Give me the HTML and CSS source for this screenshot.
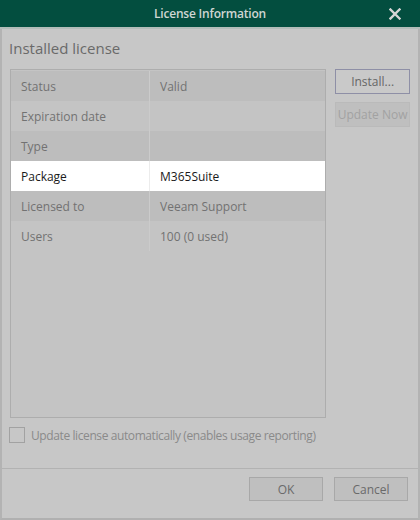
FILE: index.html
```html
<!DOCTYPE html>
<html>
<head>
<meta charset="utf-8">
<link rel="stylesheet" href="styles.css">
</head>
<body>
<div class="window">
  <div class="titlebar">
    <span class="title">License Information</span>
    <span class="close">
      <svg width="12" height="12" viewBox="0 0 12 12"><path d="M1.5 1.5 L10.5 10.5 M10.5 1.5 L1.5 10.5" stroke="#d6d6d6" stroke-width="2.4" stroke-linecap="square"/></svg>
    </span>
  </div>
  <div class="content">
    <div class="heading">Installed license</div>
    <div class="main">
      <div class="table">
        <div class="row alt"><div class="cell key">Status</div><div class="cell val">Valid</div></div>
        <div class="row"><div class="cell key">Expiration date</div><div class="cell val"></div></div>
        <div class="row alt"><div class="cell key">Type</div><div class="cell val"></div></div>
        <div class="row selected"><div class="cell key">Package</div><div class="cell val">M365Suite</div></div>
        <div class="row alt"><div class="cell key">Licensed to</div><div class="cell val">Veeam Support</div></div>
        <div class="row"><div class="cell key">Users</div><div class="cell val">100 (0 used)</div></div>
      </div>
      <div class="side">
        <div class="btn primary">Install...</div>
        <div class="btn disabled">Update Now</div>
      </div>
    </div>
    <div class="check">
      <span class="box"></span>
      <span class="check-label">Update license automatically (enables usage reporting)</span>
    </div>
  </div>
  <div class="footer">
    <div class="btn footer-btn ok">OK</div>
    <div class="btn footer-btn">Cancel</div>
  </div>
</div>
</body>
</html>
```

FILE: styles.css
```css
html, body {
  margin: 0;
  padding: 0;
  width: 420px;
  height: 520px;
  overflow: hidden;
  background: #c7c7c7;
  font-family: "Open Sans", "Noto Sans", sans-serif;
}

.window {
  width: 420px;
  height: 520px;
  box-sizing: border-box;
  border-left: 2px solid #b3b3b3;
  border-right: 2px solid #b3b3b3;
  border-bottom: 2px solid #b0b0b0;
  display: flex;
  flex-direction: column;
  background: #c7c7c7;
}

.titlebar {
  height: 27px;
  margin: 0 -2px;
  background: #034e3f;
  border-bottom: 2px solid #b2bdb9;
  display: flex;
  align-items: center;
  justify-content: center;
  position: relative;
}

.title {
  color: #cfd6d3;
  font-size: 12px;
  font-weight: 600;
  letter-spacing: -0.2px;
}

.close {
  position: absolute;
  right: 19px;
  top: 8px;
  width: 12px;
  height: 12px;
  display: flex;
}

.content {
  flex: 1;
  padding: 9px 8px 0 7px;
  display: flex;
  flex-direction: column;
}

.heading {
  font-size: 15px;
  color: #6a6a6a;
  line-height: 20px;
  height: 22px;
  margin-bottom: 9px;
}

.main {
  display: flex;
  gap: 9px;
  align-items: flex-start;
}

.table {
  width: 317px;
  height: 349px;
  box-sizing: border-box;
  border: 1px solid #adadad;
  padding-top: 1px;
  margin-left: 1px;
  background: #c4c4c4;
  display: flex;
  flex-direction: column;
}

.row {
  display: flex;
  height: 30px;
  font-size: 12px;
  color: #727272;
  background: #c4c4c4;
}

.row.alt {
  background: #bdbdbd;
}

.row.selected {
  background: #ffffff;
  color: #1a1a1a;
}

.cell {
  display: flex;
  align-items: center;
  box-sizing: border-box;
}

.key {
  width: 139px;
  padding-left: 10px;
  border-right: 1px solid #cbcbcb;
}

.selected .key {
  border-right-color: #ececec;
}

.val {
  flex: 1;
  padding-left: 10px;
}

.side {
  display: flex;
  flex-direction: column;
  gap: 8px;
  width: 75px;
}

.btn {
  height: 25px;
  box-sizing: border-box;
  border: 1px solid #adadad;
  display: flex;
  align-items: center;
  justify-content: center;
  font-size: 12px;
  color: #666666;
  background: #c4c4c4;
}

.btn.primary {
  border: 1px solid #8e8fa6;
  background: #c9c9c9;
}

.btn.disabled {
  color: #a2a2a2;
  border-color: #bababa;
  background: #bfbfbf;
}

.check {
  display: flex;
  align-items: center;
  gap: 6px;
  margin-top: 9px;
  height: 16px;
}

.box {
  width: 16px;
  height: 16px;
  box-sizing: border-box;
  border: 1px solid #a2a2a2;
}

.check-label {
  font-size: 12px;
  color: #8a8a8a;
  letter-spacing: -0.4px;
}

.footer {
  height: 41px;
  border-top: 1px solid #b2b2b2;
  display: flex;
  justify-content: flex-end;
  align-items: flex-start;
  gap: 11px;
  padding: 8px 10px 0 0;
}

.footer-btn {
  width: 74px;
  height: 24px;
  background: #bfbfbf;
  border-color: #a8a8a8;
  color: #6a6a6a;
}
```
